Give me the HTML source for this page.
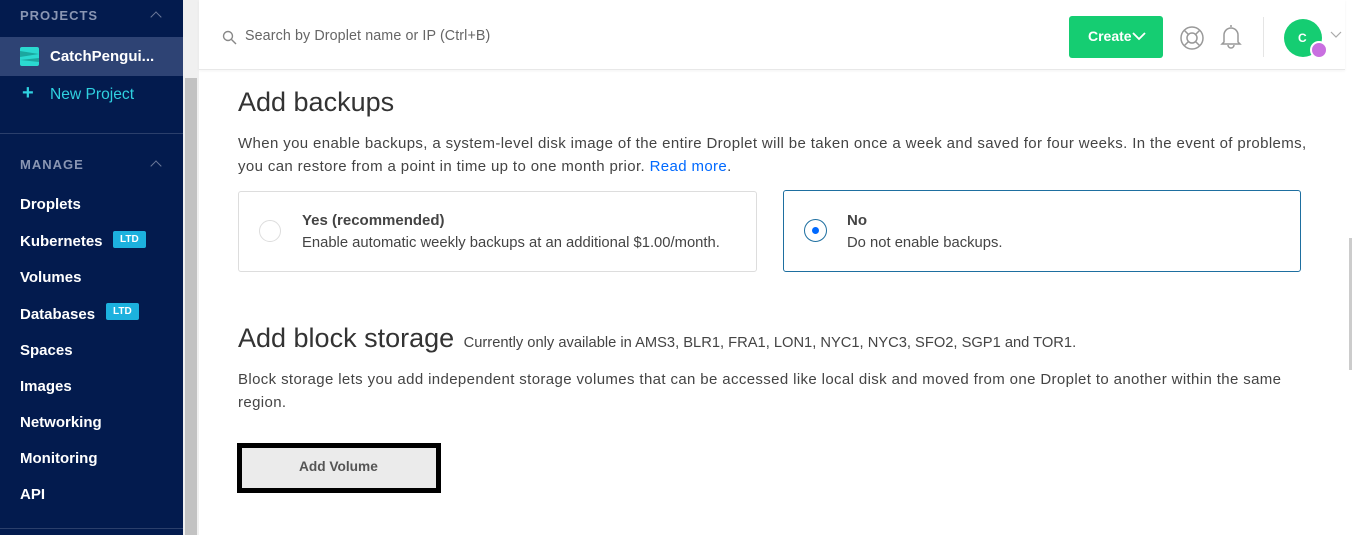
<!DOCTYPE html>
<html><head><meta charset="utf-8"><style>
*{margin:0;padding:0;box-sizing:border-box}
body{width:1354px;height:535px;overflow:hidden;background:#fff;font-family:"Liberation Sans",sans-serif;position:relative}
.sb{position:absolute;left:0;top:0;width:183px;height:535px;background:#031b4e}
.scr{position:absolute;left:183px;top:0;width:16px;height:535px;background:#f0f0f0}
.thumb{position:absolute;left:185px;top:78px;width:12px;height:457px;background:#c2c2c2}
.t{position:absolute;white-space:nowrap}
.head{color:#8a96b3;font-size:13px;font-weight:bold;letter-spacing:1px}
.nav{color:#fff;font-size:15px;font-weight:bold;left:20px}
.ltd{position:absolute;background:#1cb1de;color:#fff;font-size:10px;font-weight:bold;padding:3px 7px;border-radius:2px}
.chev{position:absolute;width:8px;height:8px;border-left:1.5px solid #6b7899;border-top:1.5px solid #6b7899;transform:rotate(45deg)}
.main{color:#444;font-size:15px;letter-spacing:0.37px}
.card{position:absolute;border:1px solid #ddd;border-radius:3px}
</style></head><body>
<div class="sb"></div>
<div class="scr"></div><div class="thumb"></div>
<div class="t head" style="left:20px;top:8px">PROJECTS</div>
<div class="chev" style="left:152px;top:13px"></div>
<div style="position:absolute;left:0;top:37px;width:183px;height:39px;background:#2e4374"></div>
<div style="position:absolute;left:20px;top:47px;width:19px;height:19px;background:#2bd9d0;border-radius:2px"></div>
<svg style="position:absolute;left:20px;top:47px" width="19" height="19"><path d="M0 4 L19 7 L0 10 Z M19 11 L0 13 L19 15Z" fill="#1ba79f"/></svg>
<div class="t nav" style="left:50px;top:48px">CatchPengui...</div>
<div class="t" style="left:22px;top:82px;color:#2fd1e0;font-size:20px;font-weight:bold">+</div>
<div class="t" style="left:50px;top:86px;color:#2fd1e0;font-size:15.6px">New Project</div>
<div style="position:absolute;left:0;top:133px;width:183px;height:1px;background:#2b3f6b"></div>
<div class="t head" style="left:20px;top:157px">MANAGE</div>
<div class="chev" style="left:152px;top:162px"></div>
<div class="t nav" style="top:196px">Droplets</div>
<div class="t nav" style="top:233px">Kubernetes</div><div class="ltd" style="left:113px;top:231px">LTD</div>
<div class="t nav" style="top:269px">Volumes</div>
<div class="t nav" style="top:306px">Databases</div><div class="ltd" style="left:106px;top:303px">LTD</div>
<div class="t nav" style="top:342px">Spaces</div>
<div class="t nav" style="top:378px">Images</div>
<div class="t nav" style="top:414px">Networking</div>
<div class="t nav" style="top:450px">Monitoring</div>
<div class="t nav" style="top:486px">API</div>
<div style="position:absolute;left:0;top:528px;width:183px;height:1px;background:#2b3f6b"></div>
<div style="position:absolute;left:199px;top:0;width:1146px;height:70px;background:#fff;border-bottom:1px solid #e8e8e8;box-shadow:0 1px 3px rgba(0,0,0,.05)"></div>
<svg style="position:absolute;left:222px;top:30px" width="15" height="15"><circle cx="6" cy="6" r="4.5" fill="none" stroke="#888" stroke-width="1.4"/><path d="M9.5 9.5L14 14" stroke="#888" stroke-width="1.4"/></svg>
<div class="t" style="left:245px;top:28px;color:#666;font-size:14.3px;letter-spacing:0.1px">Search by Droplet name or IP (Ctrl+B)</div>
<div style="position:absolute;left:1069px;top:16px;width:94px;height:42px;background:#15cd72;border-radius:3px"></div>
<div class="t" style="left:1088px;top:28px;color:#fff;font-size:14px;font-weight:bold">Create</div>
<svg style="position:absolute;left:1132px;top:32px" width="14" height="9"><path d="M1 1L7 7L13 1" fill="none" stroke="#fff" stroke-width="1.8"/></svg>
<svg style="position:absolute;left:1179px;top:25px" width="26" height="26"><circle cx="13" cy="13" r="11" fill="none" stroke="#999" stroke-width="1.5"/><circle cx="13" cy="13" r="5" fill="none" stroke="#999" stroke-width="1.5"/><path d="M5 5L9.5 9.5M21 5L16.5 9.5M5 21L9.5 16.5M21 21L16.5 16.5" stroke="#999" stroke-width="1.5"/></svg>
<svg style="position:absolute;left:1218px;top:23px" width="26" height="26"><path d="M13 2V4M6 19V12A7 7 0 0 1 20 12V19L22 21H4Z M10 22A3 3 0 0 0 16 22" fill="none" stroke="#999" stroke-width="1.5"/></svg>
<div style="position:absolute;left:1263px;top:17px;width:1px;height:40px;background:#e5e5e5"></div>
<div style="position:absolute;left:1284px;top:19px;width:38px;height:38px;border-radius:50%;background:#15cd72"></div>
<div class="t" style="left:1298px;top:31px;color:#fff;font-size:12px;font-weight:bold">C</div>
<div style="position:absolute;left:1310px;top:41px;width:18px;height:18px;border-radius:50%;background:#c96fe0;border:2px solid #fff"></div>
<svg style="position:absolute;left:1330px;top:31px" width="12" height="8"><path d="M1 1L6 6L11 1" fill="none" stroke="#aaa" stroke-width="1.2"/></svg>
<div style="position:absolute;left:1349px;top:238px;width:3px;height:132px;background:#ccc"></div>
<div class="t" style="left:238px;top:87px;color:#333;font-size:27px">Add backups</div>
<div class="t main" style="left:238px;top:135px">When you enable backups, a system-level disk image of the entire Droplet will be taken once a week and saved for four weeks. In the event of problems,</div>
<div class="t main" style="left:238px;top:158px">you can restore from a point in time up to one month prior. <span style="color:#0069ff">Read more</span>.</div>
<div class="card" style="left:238px;top:191px;width:519px;height:81px"></div>
<div style="position:absolute;left:259px;top:220px;width:22px;height:22px;border-radius:50%;border:1px solid #ddd"></div>
<div class="t" style="left:302px;top:212px;color:#444;font-size:15px;font-weight:bold">Yes (recommended)</div>
<div class="t" style="left:302px;top:235px;color:#444;font-size:14.8px">Enable automatic weekly backups at an additional $1.00/month.</div>
<div class="card" style="left:783px;top:190px;width:518px;height:82px;border-color:#1e6fa0"></div>
<div style="position:absolute;left:804px;top:219px;width:23px;height:23px;border-radius:50%;border:1px solid #1e6fa0"></div>
<div style="position:absolute;left:812px;top:227px;width:7px;height:7px;border-radius:50%;background:#0069ff"></div>
<div class="t" style="left:847px;top:212px;color:#444;font-size:15px;font-weight:bold">No</div>
<div class="t" style="left:847px;top:235px;color:#444;font-size:14.8px">Do not enable backups.</div>
<div class="t" style="left:238px;top:323px;color:#333;font-size:27px">Add block storage <span style="font-size:14.7px;color:#444;margin-left:2px">Currently only available in AMS3, BLR1, FRA1, LON1, NYC1, NYC3, SFO2, SGP1 and TOR1.</span></div>
<div class="t main" style="left:238px;top:371px">Block storage lets you add independent storage volumes that can be accessed like local disk and moved from one Droplet to another within the same</div>
<div class="t main" style="left:238px;top:394px">region.</div>
<div style="position:absolute;left:237px;top:443px;width:204px;height:50px;border:5px solid #000;background:#ebebeb"></div>
<div class="t" style="left:299px;top:459px;color:#555;font-size:13.7px;font-weight:bold">Add Volume</div>
</body></html>
